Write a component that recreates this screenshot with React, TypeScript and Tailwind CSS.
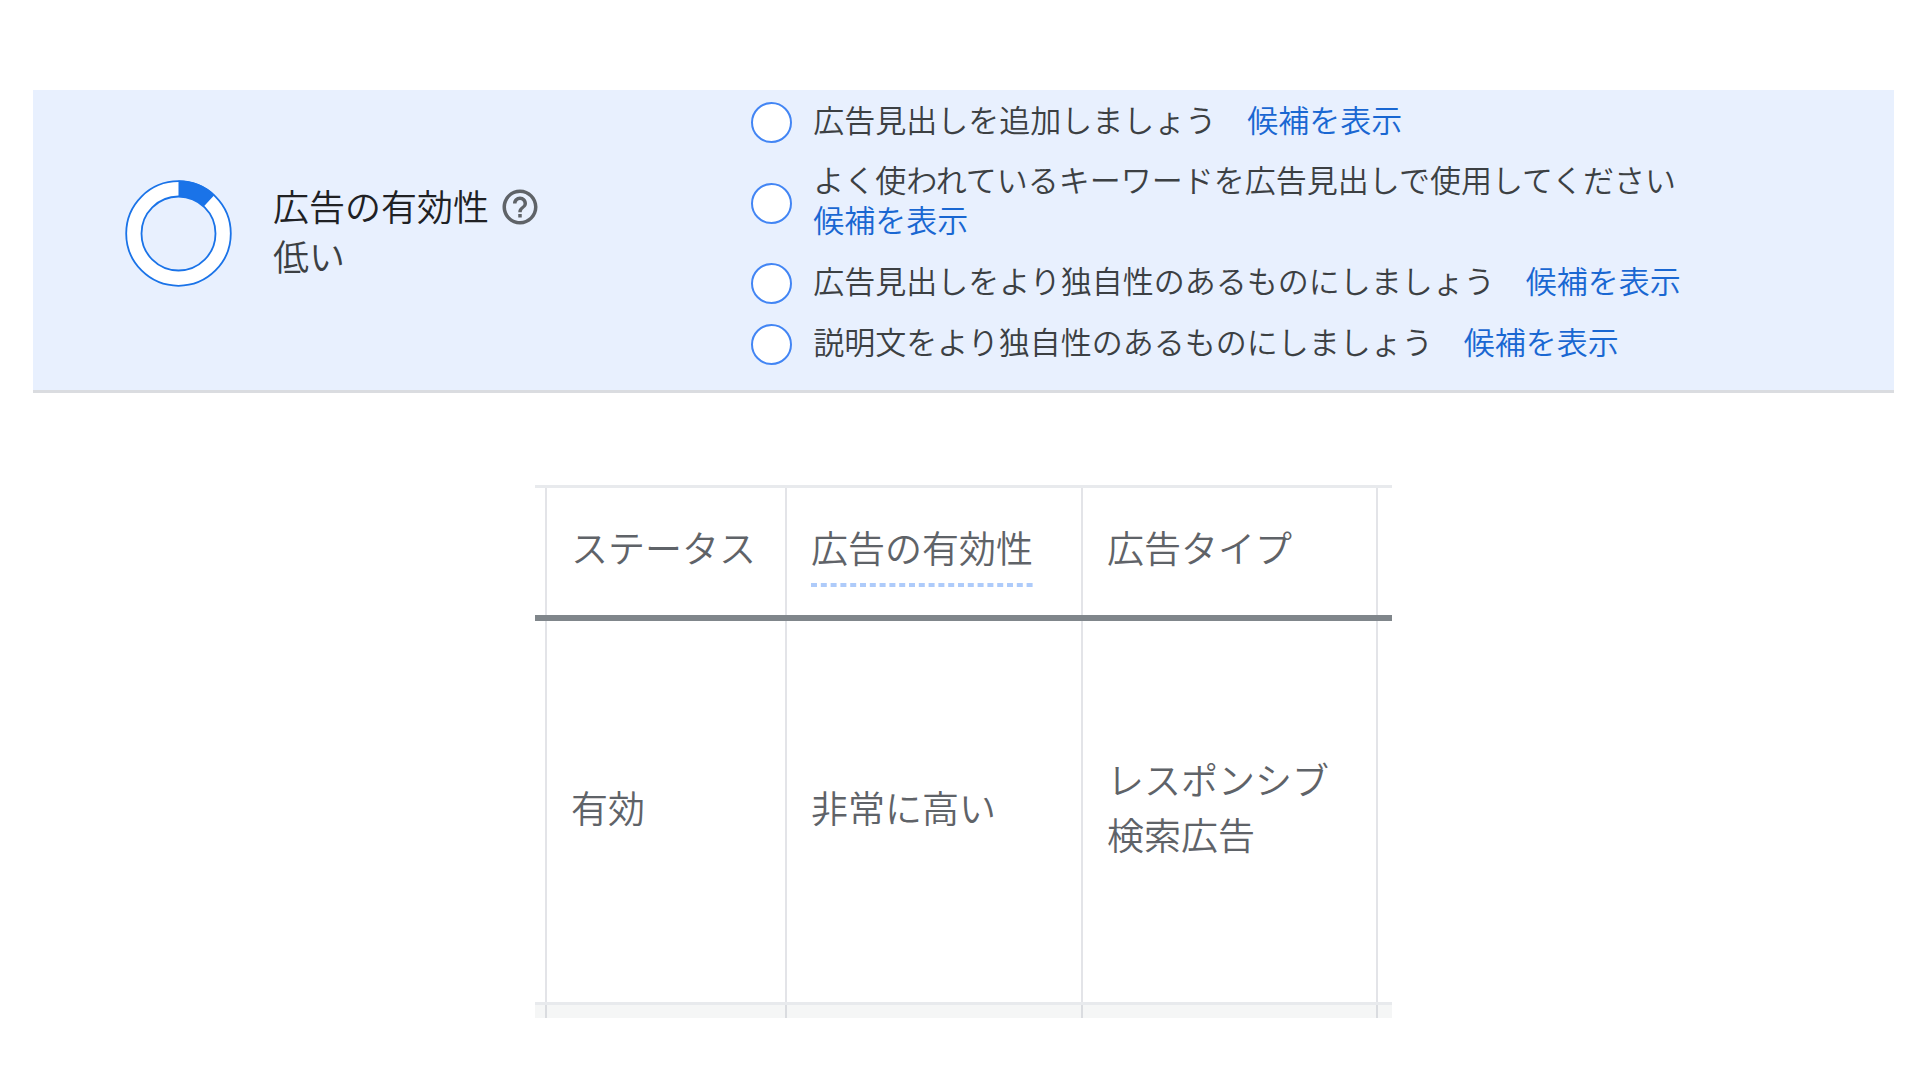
import React from "react";
import { MdHelpOutline } from "react-icons/md";

const suggestions = [
  { id: 1, text: "広告見出しを追加しましょう" },
  { id: 2, text: "よく使われているキーワードを広告見出しで使用してください" },
  { id: 3, text: "広告見出しをより独自性のあるものにしましょう" },
  { id: 4, text: "説明文をより独自性のあるものにしましょう" },
];

const StrengthRing = () => {
  return (
    <svg viewBox="0 0 107 107" className="size-[107px] shrink-0" aria-hidden="true">
      <circle cx="53.5" cy="53.5" r="45" fill="none" stroke="#fff" strokeWidth="15" />
      <path
        d="M53.5 8.5 A45 45 0 0 1 84.2 20.6"
        fill="none"
        stroke="#1a73e8"
        strokeWidth="16"
      />
      <circle cx="53.5" cy="53.5" r="52.3" fill="none" stroke="#1a73e8" strokeWidth="1.8" />
      <circle cx="53.5" cy="53.5" r="37" fill="none" stroke="#1a73e8" strokeWidth="1.8" />
    </svg>
  );
};

const AdStrength = () => {
  return (
    <section className="flex items-center border-b-[3px] border-[#dadce0] bg-[#e8f0fe] pt-3 pb-[25px]">
      <div className="flex w-[38.6%] shrink-0 items-center gap-[41px] pl-[92px]">
        <StrengthRing />
        <div className="-mt-1 mb-1 text-[36px] leading-[50px]">
          <div className="flex items-center gap-[10px]">
            <h1 className="text-[#202124]">広告の有効性</h1>
            <button type="button" aria-label="ヘルプ" className="pt-1 text-[#5f6368]">
              <MdHelpOutline className="size-[42px]" />
            </button>
          </div>
          <p className="text-[#3c4043]">低い</p>
        </div>
      </div>
      <ul className="flex flex-col gap-5 text-[31px] leading-[40px] text-[#3c4043]">
        {suggestions.map((item) => (
          <li key={item.id} className="flex items-center gap-[21px]">
            <span className="size-[41px] shrink-0 rounded-full border-2 border-[#4285f4] bg-white"></span>
            <p className="-mt-1 mb-1 max-w-[900px]">
              {item.text}
              {"\u3000"}
              <a href="#" className="inline-block text-[#1967d2]">
                候補を表示
              </a>
            </p>
          </li>
        ))}
      </ul>
    </section>
  );
};

const AdTable = () => {
  return (
    <table className="mx-auto mt-[92px] table-fixed border-collapse text-left text-[37px] leading-[55px] text-[#5f6368]">
      <colgroup>
        <col className="w-[11px]" />
        <col className="w-[240px]" />
        <col className="w-[296px]" />
        <col className="w-[295px]" />
        <col className="w-[15px]" />
      </colgroup>
      <thead>
        <tr className="h-[131px] border-t-[3px] border-b-[6px] border-t-[#e8eaed] border-b-[#80868b] *:p-0 *:font-[350]">
          <td></td>
          <th className="border-l-2 border-l-[#e3e4e8]">
            <div className="pb-2 pl-6">ステータス</div>
          </th>
          <th className="border-l-2 border-l-[#e3e4e8]">
            <div className="pt-1 pl-6">
              広告の有効性
              <svg viewBox="0 0 222 4" className="mt-2 h-1 w-[222px]" aria-hidden="true">
                <path d="M0 2H222" stroke="#aecbfa" strokeWidth="4" strokeDasharray="6 3.8" />
              </svg>
            </div>
          </th>
          <th className="border-l-2 border-l-[#e3e4e8]">
            <div className="pb-2 pl-6">広告タイプ</div>
          </th>
          <td className="border-l-2 border-l-[#e3e4e8]"></td>
        </tr>
      </thead>
      <tbody>
        <tr className="h-[386px] border-b-[3px] border-b-[#e8eaed] *:p-0">
          <td></td>
          <td className="border-l-2 border-l-[#e3e4e8]">
            <div className="pb-2 pl-6">有効</div>
          </td>
          <td className="border-l-2 border-l-[#e3e4e8]">
            <div className="pb-2 pl-6">非常に高い</div>
          </td>
          <td className="border-l-2 border-l-[#e3e4e8]">
            <div className="pb-2 pl-6">
              レスポンシブ
              <br />
              検索広告
            </div>
          </td>
          <td className="border-l-2 border-l-[#e3e4e8]"></td>
        </tr>
        <tr className="h-[14px] bg-[#f5f6f6] *:p-0">
          <td></td>
          <td className="border-l-2 border-l-[#dadce0]"></td>
          <td className="border-l-2 border-l-[#dadce0]"></td>
          <td className="border-l-2 border-l-[#dadce0]"></td>
          <td className="border-l-2 border-l-[#dadce0]"></td>
        </tr>
      </tbody>
    </table>
  );
};

const App = () => {
  return (
    <main
      lang="ja"
      className="min-h-screen bg-white pt-[90px] pr-[26px] pl-[33px] font-['Noto_Sans_CJK_JP',sans-serif] font-[350]"
    >
      <AdStrength />
      <AdTable />
    </main>
  );
};

export default App;
